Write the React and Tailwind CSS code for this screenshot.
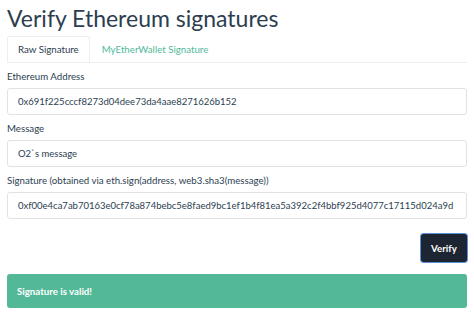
import React from 'react';

const inputClass =
  'block w-full h-[27px] px-[10px] bg-white border border-[#dfe3e6] rounded-[3px] text-[9.5px] text-[#2c3e50] outline-none font-[Lato,sans-serif]';

export default function App() {
  return (
    <div className="w-[474px] h-[314px] bg-white px-[7px] text-[#2c3e50] overflow-hidden font-[Lato,sans-serif]">
      <h1 className="text-[23px] leading-[28px] pt-[4px] font-normal text-[#2c3e50]">Verify Ethereum signatures</h1>

      <div className="mt-[4px] flex border-b border-[#eceeef]">
        <div className="h-[26px] px-[10px] flex items-center border border-b-0 border-[#eceeef] rounded-t-[3px] bg-white -mb-px text-[9.7px] text-[#2c3e50]">
          Raw Signature
        </div>
        <div className="h-[26px] px-[12px] flex items-center text-[9.7px] text-[#4fb99a]">MyEtherWallet Signature</div>
      </div>

      <div className="mt-[6px]">
        <label className="block text-[9.7px] leading-[14px] mb-[5px]">Ethereum Address</label>
        <input className={inputClass} defaultValue="0x691f225cccf8273d04dee73da4aae8271626b152" />
      </div>

      <div className="mt-[6px]">
        <label className="block text-[9.7px] leading-[14px] mb-[5px]">Message</label>
        <input className={inputClass} defaultValue="O2`s message" />
      </div>

      <div className="mt-[6px]">
        <label className="block text-[9.7px] leading-[14px] mb-[5px]">Signature (obtained via eth.sign(address, web3.sha3(message))</label>
        <input
          className={inputClass}
          defaultValue="0xf00e4ca7ab70163e0cf78a874bebc5e8faed9bc1ef1b4f81ea5a392c2f4bbf925d4077c17115d024a9d"
        />
      </div>

      <div className="flex justify-end mt-[15px]">
        <button className="h-[28px] w-[46px] rounded-[3px] bg-[#1e2532] text-white text-[9.7px] font-bold ring-1 ring-[#5b8fd6]">
          Verify
        </button>
      </div>

      <div className="mt-[12px] h-[34px] rounded-[3px] bg-[#52b898] flex items-center px-[10px] text-white text-[9.7px] font-bold">
        Signature is valid!
      </div>
    </div>
  );
}
